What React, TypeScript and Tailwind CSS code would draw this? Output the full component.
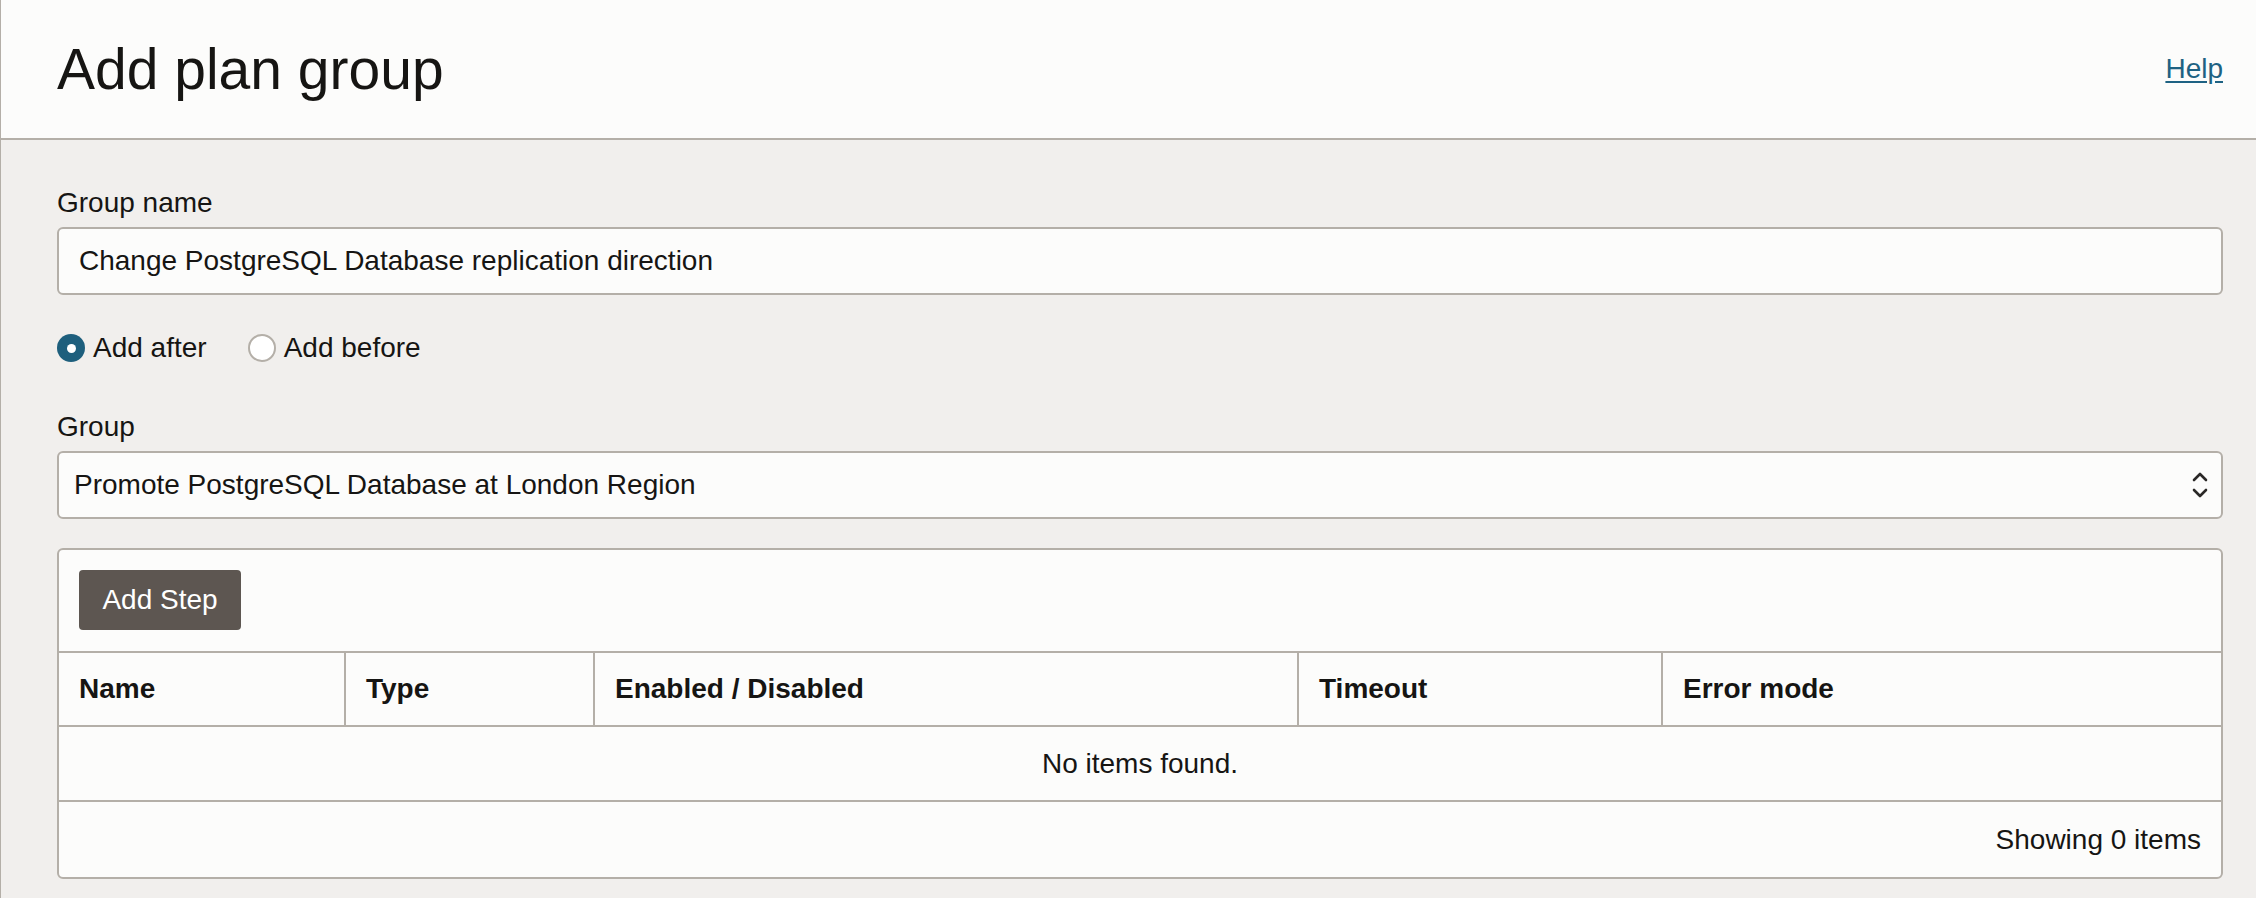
import { useState } from "react";

const columns = [
  { label: "Name", w: "w-[285px]" },
  { label: "Type", w: "w-[249px] border-l-2" },
  { label: "Enabled / Disabled", w: "w-[704px] border-l-2" },
  { label: "Timeout", w: "w-[364px] border-l-2" },
  { label: "Error mode", w: "flex-1 border-l-2" },
];

function Radio({ checked, label, onClick }: { checked: boolean; label: string; onClick: () => void }) {
  return (
    <button type="button" onClick={onClick} className="flex items-center gap-[8px] h-[32px]">
      {checked ? (
        <span className="w-[28px] h-[28px] rounded-full bg-[#1e5f7d] flex items-center justify-center">
          <span className="w-[9px] h-[9px] rounded-full bg-white" />
        </span>
      ) : (
        <span className="w-[28px] h-[28px] rounded-full bg-white border-2 border-[#b4afa8]" />
      )}
      <span>{label}</span>
    </button>
  );
}

export default function App() {
  const [position, setPosition] = useState<"after" | "before">("after");

  return (
    <div className="min-h-screen bg-[#f1efed] border-l border-[#b4afa8] text-[#161513] text-[28px] leading-[32px] font-['Liberation_Sans',Arial,sans-serif]">
      {/* Header */}
      <div className="h-[140px] bg-[#fcfcfb] border-b-2 border-[#b4afa8] flex items-center justify-between pl-[56px] pr-[33px]">
        <h1 className="text-[57px] leading-none font-normal">Add plan group</h1>
        <a href="#" className="text-[#1e6283] underline underline-offset-[3px]">Help</a>
      </div>

      <div className="pl-[56px] pr-[33px] pt-[47px] pb-[20px]">
        <label className="block">Group name</label>
        <div className="mt-[8px] h-[68px] bg-[#fcfcfb] border-2 border-[#b4afa8] rounded-[6px] flex items-center px-[20px]">
          Change PostgreSQL Database replication direction
        </div>

        <div className="mt-[37px] flex items-center gap-[41px]">
          <Radio checked={position === "after"} label="Add after" onClick={() => setPosition("after")} />
          <Radio checked={position === "before"} label="Add before" onClick={() => setPosition("before")} />
        </div>

        <label className="block mt-[47px]">Group</label>
        <div className="mt-[8px] h-[68px] bg-[#fcfcfb] border-2 border-[#b4afa8] rounded-[6px] flex items-center justify-between pl-[15px] pr-[13px]">
          <span>Promote PostgreSQL Database at London Region</span>
          <svg width="16" height="28" viewBox="0 0 16 28" fill="none" stroke="#2a2826" strokeWidth="2.6" strokeLinecap="round" strokeLinejoin="round">
            <polyline points="2,9 8,3 14,9" />
            <polyline points="2,19 8,25 14,19" />
          </svg>
        </div>

        {/* Steps table */}
        <div className="mt-[29px] bg-[#fcfcfb] border-2 border-[#b4afa8] rounded-[6px] overflow-hidden">
          <div className="pt-[20px] pb-[21px] px-[20px]">
            <button className="h-[60px] w-[162px] rounded-[4px] bg-[#5d5651] text-white">Add Step</button>
          </div>
          <div className="flex h-[76px] border-t-2 border-b-2 border-[#b4afa8]">
            {columns.map((c) => (
              <div key={c.label} className={`${c.w} border-[#b4afa8] flex items-center px-[20px] font-bold`}>
                {c.label}
              </div>
            ))}
          </div>
          <div className="h-[75px] border-b-2 border-[#b4afa8] flex items-center justify-center">No items found.</div>
          <div className="h-[75px] flex items-center justify-end px-[20px]">Showing 0 items</div>
        </div>
      </div>
    </div>
  );
}
